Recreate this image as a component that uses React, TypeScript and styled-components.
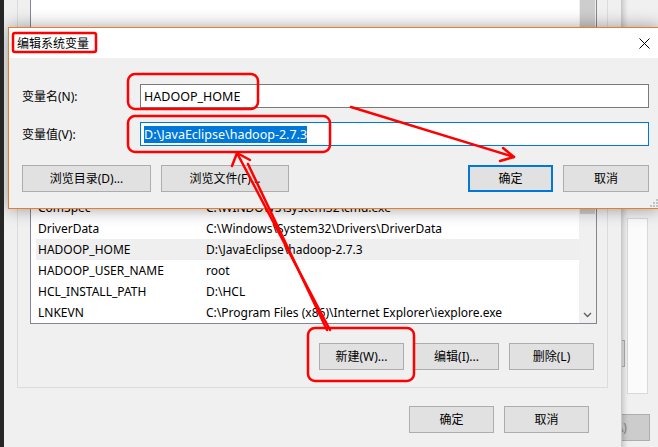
import React from 'react'
import styled, { createGlobalStyle } from 'styled-components'

const GlobalStyle = createGlobalStyle`
  html, body {
    margin: 0;
    padding: 0;
    background: #f0f0f0;
  }
  body {
    font-family: "Noto Sans", "Noto Sans CJK SC", sans-serif;
    font-size: 12px;
    color: #000;
  }
  * {
    box-sizing: border-box;
  }
`

// the desktop; its left border is the dark edge of the window behind
const Desktop = styled.div`
  position: relative;
  width: 658px;
  height: 447px;
  overflow: hidden;
  background: #f0f0f0;
  border-left: 4px solid #262626;
`

/* ---------- window at the far right (system properties) ---------- */

const BackWindow = styled.div`
  position: absolute;
  left: 536px;
  top: 0;
  width: 130px;
  height: 447px;
  background: #f0f0f0;
  display: flex;
  flex-direction: column;
  padding-top: 218px;
`

const BackRow = styled.div`
  display: flex;
  align-items: flex-start;
  gap: 2px;
`

const BackPanel = styled.div`
  width: 21px;
  height: 176px;
  background: #fbfbfb;
  border: 1px solid #d9d9d9;
`

const HiddenButton = styled.div`
  width: 85px;
  height: 27px;
  margin-top: 122px;
  background: #e1e1e1;
  border: 1px solid #adadad;
`

const ApplyRow = styled.div`
  display: flex;
  margin-top: 20px;
  padding-left: 25px;
`

/* ---------- environment variables window ---------- */

const EnvWindow = styled.div`
  position: absolute;
  left: 0;
  top: -40px;
  width: 618px;
  height: 500px;
  background: #f0f0f0;
  border-right: 1px solid #c9c9c9;
  box-shadow: 2px 0 5px rgba(0, 0, 0, 0.18);
  display: flex;
  flex-direction: column;
`

const GroupBox = styled.div`
  margin: 10px 13px 0 13px;
  height: 418px;
  border: 1px solid #dcdcdc;
  padding: 9px 10px 17px 12px;
  display: flex;
  flex-direction: column;
`

const ListBox = styled.div`
  flex: 1;
  display: flex;
  background: #fff;
  border: 1px solid #828790;
  overflow: hidden;
`

const Rows = styled.div`
  flex: 1;
  display: flex;
  flex-direction: column;
  justify-content: flex-end;
  overflow: hidden;
`

const Row = styled.div<{ $selected?: boolean }>`
  display: grid;
  grid-template-columns: 168px 1fr;
  align-items: center;
  height: 21px;
  margin-left: 5px;
  padding-left: 2px;
  white-space: nowrap;
  background: ${p => (p.$selected ? '#efefef' : 'transparent')};
`

const ScrollBar = styled.div`
  width: 17px;
  background: #f0f0f0;
  display: flex;
  flex-direction: column;
  align-items: center;
`

const Thumb = styled.div`
  width: 15px;
  height: 233px;
  background: #cdcdcd;
`

const ScrollArrow = styled.div`
  margin-top: auto;
  height: 17px;
  display: flex;
  align-items: center;
  justify-content: center;
`

const ButtonRow = styled.div<{ $top: number; $right: number }>`
  display: flex;
  justify-content: flex-end;
  gap: 10px;
  margin-top: ${p => p.$top}px;
  padding-right: ${p => p.$right}px;
`

const Button = styled.button<{ $w: number; $primary?: boolean; $disabled?: boolean }>`
  flex: none;
  width: ${p => p.$w}px;
  height: 27px;
  padding: 0;
  margin: 0;
  background: ${p => (p.$disabled ? '#cccccc' : '#e1e1e1')};
  border: ${p => (p.$primary ? '2px solid #0078d7' : '1px solid #adadad')};
  color: ${p => (p.$disabled ? '#838383' : '#000')};
  font-family: "Noto Sans", "Noto Sans CJK SC", sans-serif;
  font-size: 12px;
  line-height: 1;
  white-space: nowrap;
`

const Grip = styled.svg`
  position: absolute;
  right: 1px;
  bottom: 1px;
`

/* ---------- edit system variable dialog ---------- */

const Dialog = styled.div`
  position: absolute;
  left: 4px;
  top: 27px;
  width: 652px;
  height: 182px;
  border: 1px solid #ec7b30;
  background: #f0f0f0;
  box-shadow: 0 0 16px rgba(0, 0, 0, 0.38);
  display: flex;
  flex-direction: column;
`

const TitleBar = styled.div`
  height: 30px;
  background: #fff;
  display: flex;
  align-items: center;
  padding-left: 8px;
`

const Title = styled.div`
  flex: 1;
  font-size: 12px;
`

const CloseButton = styled.div`
  width: 30px;
  height: 30px;
  display: flex;
  align-items: center;
  justify-content: center;
`

const DialogBody = styled.div`
  flex: 1;
  padding: 26px 10px 0 13px;
  display: flex;
  flex-direction: column;
`

const Fields = styled.div`
  display: grid;
  grid-template-columns: 118px 1fr;
  row-gap: 14px;
  align-items: center;
`

const Label = styled.div`
  font-size: 12px;
`

const TextBox = styled.div<{ $focused?: boolean }>`
  height: 24px;
  background: #fff;
  border: 1px solid ${p => (p.$focused ? '#0078d7' : '#7a7a7a')};
  padding-left: 3px;
  display: flex;
  align-items: center;
  font-size: 12.5px;
  white-space: nowrap;
`

const Selection = styled.span`
  background: #0078d7;
  color: #fff;
  line-height: 17px;
`

const DialogButtons = styled.div`
  display: flex;
  gap: 10px;
  margin-top: 19px;
`

const Spacer = styled.div`
  flex: 1;
`

/* ---------- red annotations drawn over the screenshot ---------- */

const Annotations = styled.svg`
  position: absolute;
  left: 0;
  top: 0;
  pointer-events: none;
`

const rows = [
  { name: 'ComSpec', value: 'C:\\WINDOWS\\system32\\cmd.exe' },
  { name: 'DriverData', value: 'C:\\Windows\\System32\\Drivers\\DriverData' },
  { name: 'HADOOP_HOME', value: 'D:\\JavaEclipse\\hadoop-2.7.3', selected: true },
  { name: 'HADOOP_USER_NAME', value: 'root' },
  { name: 'HCL_INSTALL_PATH', value: 'D:\\HCL' },
  { name: 'LNKEVN', value: 'C:\\Program Files (x86)\\Internet Explorer\\iexplore.exe' },
]

function GripDots() {
  const dots = [
    [6, 0], [3, 3], [6, 3], [0, 6], [3, 6], [6, 6],
  ]
  return (
    <Grip width="8" height="8" viewBox="0 0 8 8">
      {dots.map(([x, y]) => (
        <rect key={`${x}-${y}`} x={x} y={y} width="2" height="2" fill="#c2c2c2" />
      ))}
    </Grip>
  )
}

export default function App() {
  return (
    <>
      <GlobalStyle />
      <Desktop>
        <BackWindow>
          <BackRow>
            <HiddenButton />
            <BackPanel />
          </BackRow>
          <ApplyRow>
            <Button $w={85} $disabled>应用(A)</Button>
          </ApplyRow>
        </BackWindow>

        <EnvWindow>
          <GroupBox>
            <ListBox>
              <Rows>
                {rows.map(r => (
                  <Row key={r.name} $selected={r.selected}>
                    <span>{r.name}</span>
                    <span>{r.value}</span>
                  </Row>
                ))}
              </Rows>
              <ScrollBar>
                <Thumb />
                <ScrollArrow>
                  <svg width="9" height="6" viewBox="0 0 9 6">
                    <path d="M1 1 L4.5 4.5 L8 1" stroke="#606060" strokeWidth="1.4" fill="none" />
                  </svg>
                </ScrollArrow>
              </ScrollBar>
            </ListBox>
            <ButtonRow $top={19} $right={3}>
              <Button $w={85}>新建(W)...</Button>
              <Button $w={85}>编辑(I)...</Button>
              <Button $w={85}>删除(L)</Button>
            </ButtonRow>
          </GroupBox>
          <ButtonRow $top={18} $right={32}>
            <Button $w={85}>确定</Button>
            <Button $w={85}>取消</Button>
          </ButtonRow>
          <GripDots />
        </EnvWindow>

        <Dialog>
          <TitleBar>
            <Title>编辑系统变量</Title>
            <CloseButton>
              <svg width="11" height="11" viewBox="0 0 11 11">
                <path d="M0.5 0.5 L10.5 10.5 M10.5 0.5 L0.5 10.5" stroke="#000" strokeWidth="1" />
              </svg>
            </CloseButton>
          </TitleBar>
          <DialogBody>
            <Fields>
              <Label>变量名(N):</Label>
              <TextBox>HADOOP_HOME</TextBox>
              <Label>变量值(V):</Label>
              <TextBox $focused>
                <Selection>D:\JavaEclipse\hadoop-2.7.3</Selection>
              </TextBox>
            </Fields>
            <DialogButtons>
              <Button $w={129}>浏览目录(D)...</Button>
              <Button $w={128}>浏览文件(F)...</Button>
              <Spacer />
              <Button $w={85} $primary>确定</Button>
              <Button $w={86}>取消</Button>
            </DialogButtons>
          </DialogBody>
          <GripDots />
        </Dialog>

        <Annotations width="654" height="447" viewBox="4 0 654 447">
          <g fill="none" stroke="#ff0000" strokeWidth="2.5" strokeLinejoin="round" strokeLinecap="round">
            <rect x="13" y="33" width="83" height="19" rx="2" />
            <rect x="128" y="74" width="130" height="35" rx="7" />
            <rect x="128" y="116" width="202" height="36" rx="7" />
            <rect x="308" y="328" width="106" height="53" rx="7" />
            <path d="M351 107 L514 157" />
            <path d="M503 148 L514 157 L500 161" />
            <path d="M330 330 L237 153" />
            <path d="M327 330 L248 164" />
            <path d="M232 166 L237 153 L250 160" />
          </g>
        </Annotations>
      </Desktop>
    </>
  )
}
